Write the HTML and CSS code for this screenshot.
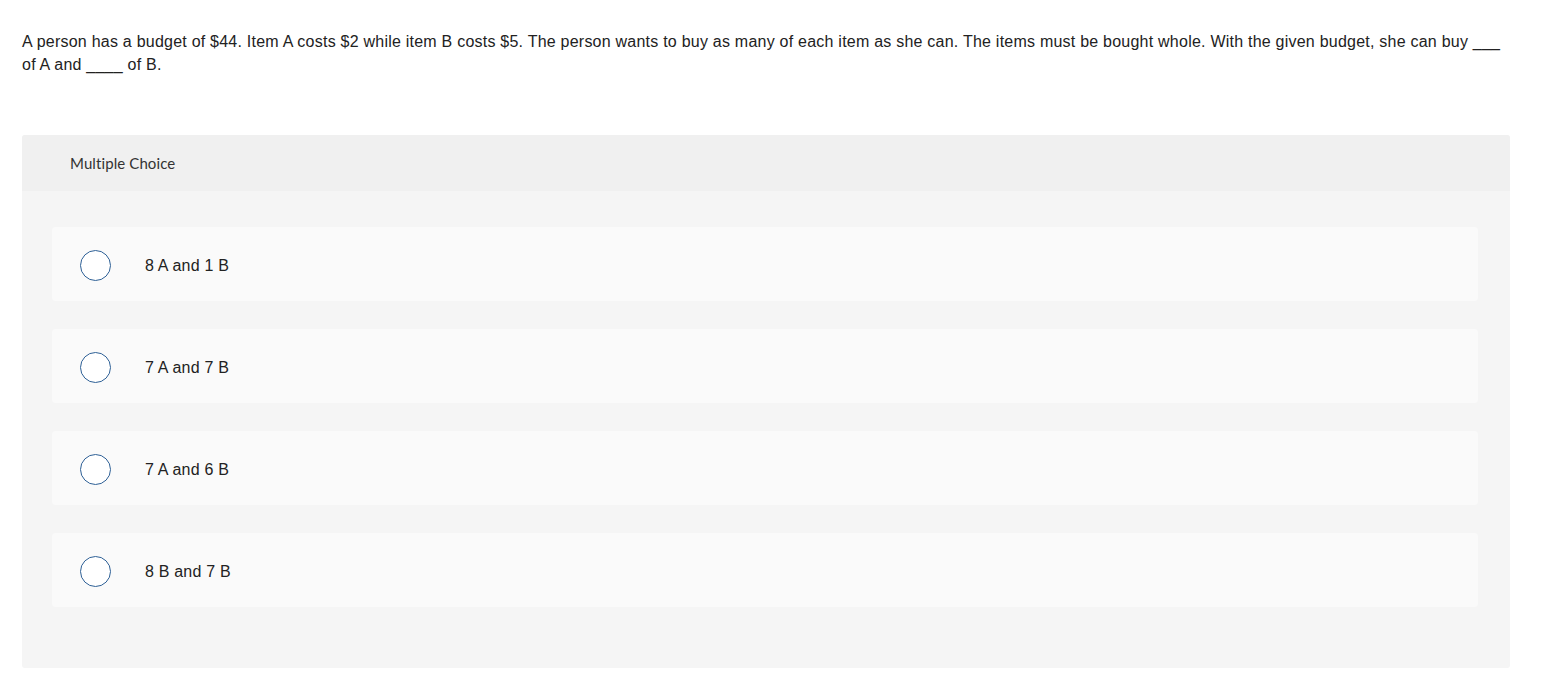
FILE: index.html
```html
<!DOCTYPE html>
<html>
<head>
<meta charset="utf-8">
<link rel="stylesheet" href="styles.css">
</head>
<body>
<div class="page">
  <p class="question">A person has a budget of $44. Item A costs $2 while item B costs $5. The person wants to buy as many of each item as she can. The items must be bought whole. With the given budget, she can buy ___ of A and ____ of B.</p>
  <section class="mc">
    <header class="mc-head">Multiple Choice</header>
    <div class="mc-body">
      <label class="opt"><span class="radio"></span><span class="opt-text">8 A and 1 B</span></label>
      <label class="opt"><span class="radio"></span><span class="opt-text">7 A and 7 B</span></label>
      <label class="opt"><span class="radio"></span><span class="opt-text">7 A and 6 B</span></label>
      <label class="opt"><span class="radio"></span><span class="opt-text">8 B and 7 B</span></label>
    </div>
  </section>
</div>
</body>
</html>
```

FILE: styles.css
```css
html, body {
  margin: 0;
  padding: 0;
  background: #fff;
}
.page {
  padding: 30px 36px 0 22px;
  font-family: "Liberation Sans", Arial, sans-serif;
  color: #222;
}
.question {
  margin: 0;
  font-size: 16px;
  letter-spacing: 0.23px;
  line-height: 23px;
  max-width: 1490px;
}
.mc {
  margin-top: 59px;
  width: 1488px;
  border-radius: 3px;
  overflow: hidden;
  background: #f5f5f5;
}
.mc-head {
  background: #f0f0f0;
  height: 56px;
  display: flex;
  align-items: center;
  padding-left: 48px;
  padding-bottom: 1px;
  box-sizing: border-box;
  font-family: Lato, "Open Sans", sans-serif;
  font-size: 15px;
  letter-spacing: 0.1px;
  color: #333;
}
.mc-body {
  padding: 36px 32px 61px 30px;
  display: flex;
  flex-direction: column;
  gap: 28px;
}
.opt {
  display: flex;
  align-items: center;
  height: 74px;
  background: #fafafa;
  border-radius: 4px;
  padding-left: 28px;
  font-size: 16px;
  letter-spacing: 0.2px;
  color: #222;
}
.radio {
  box-sizing: border-box;
  width: 31px;
  height: 31px;
  margin-top: 2px;
  border: 1.5px solid #2e6096;
  border-radius: 50%;
  background: #fff;
  flex: none;
}
.opt-text {
  margin-left: 34px;
  padding-top: 3px;
}
```
